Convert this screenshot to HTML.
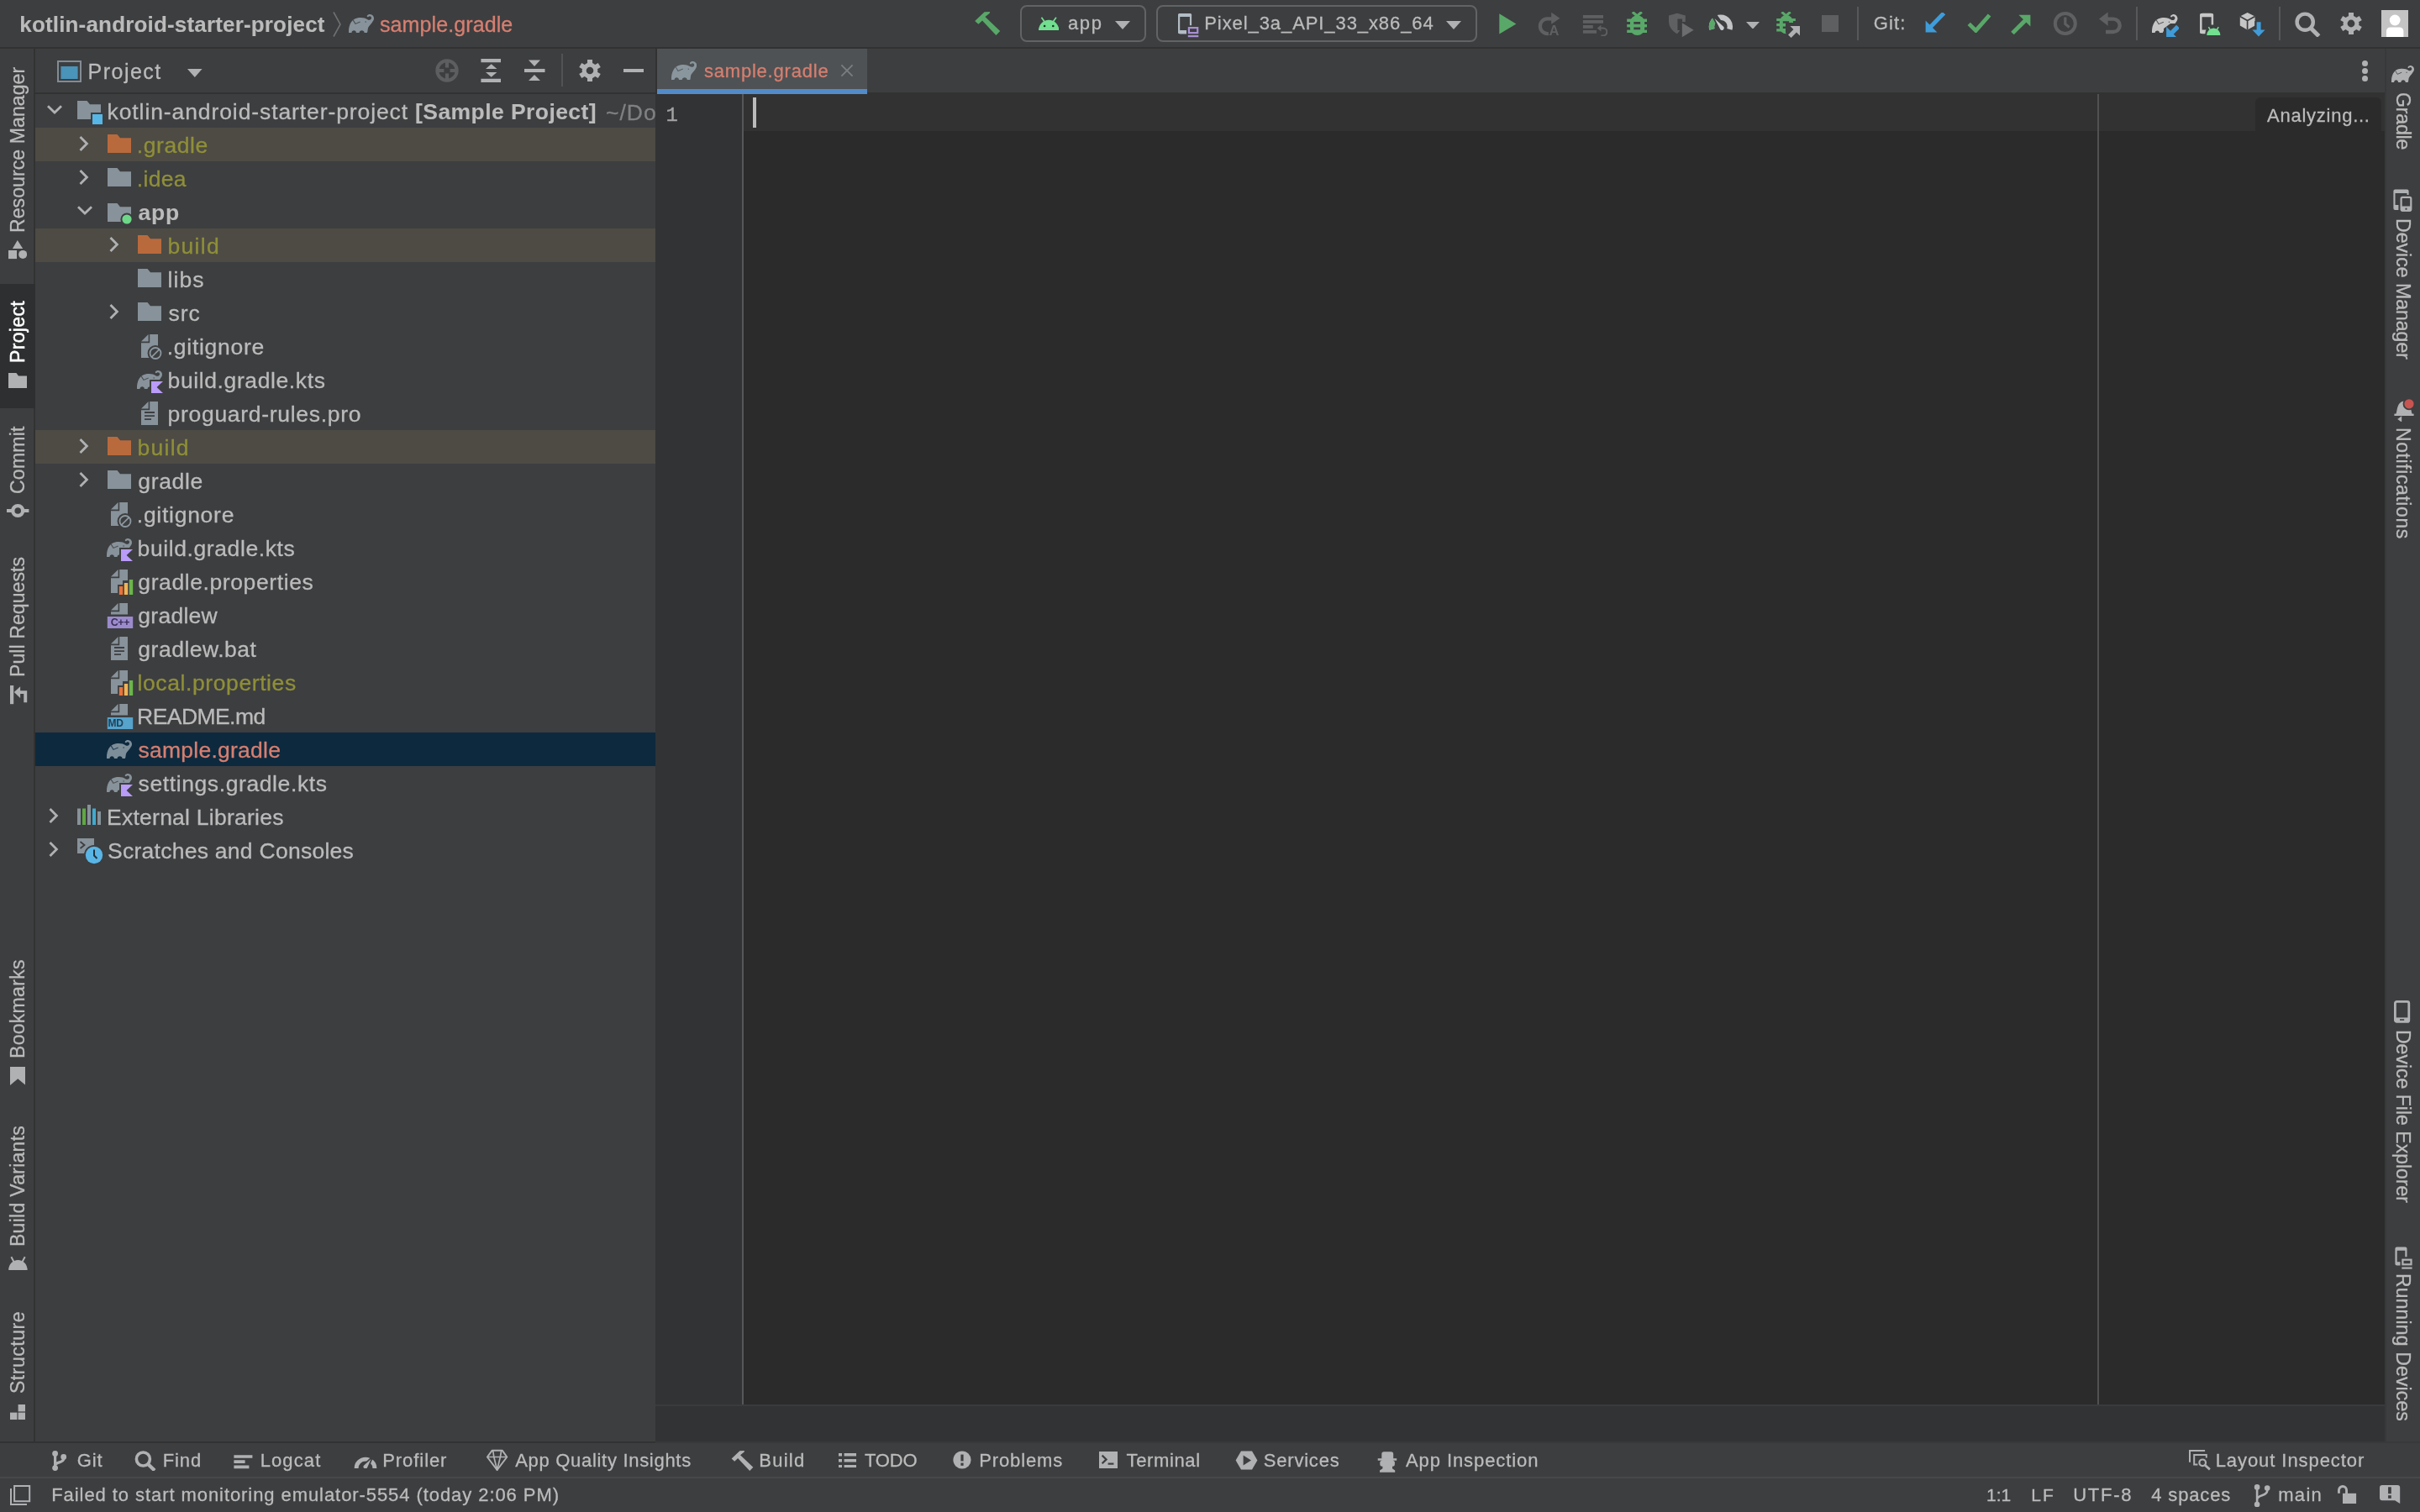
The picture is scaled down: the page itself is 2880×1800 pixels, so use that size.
<!DOCTYPE html>
<html><head><meta charset="utf-8"><title>Android Studio</title>
<style>
html,body{margin:0;padding:0;}
body{width:2880px;height:1800px;overflow:hidden;background:#3d3e40;position:relative;font-family:"Liberation Sans",sans-serif;}
div,span,svg{position:absolute;display:block;}
span{white-space:pre;-webkit-text-stroke:0.3px;}
#root{left:0;top:0;width:2880px;height:1800px;will-change:transform;}
</style></head><body><div id="root">
<div style="left:0px;top:56px;width:2880px;height:2px;background:#323232;"></div>
<div style="left:0px;top:58px;width:40px;height:1658px;background:#3d3e40;"></div>
<div style="left:40px;top:58px;width:2px;height:1658px;background:#323232;"></div>
<div style="left:42px;top:110px;width:738px;height:2px;background:#323232;"></div>
<div style="left:780px;top:58px;width:2px;height:54px;background:#323232;"></div>
<div style="left:782px;top:110px;width:2056px;height:2px;background:#323232;"></div>
<div style="left:782px;top:58px;width:250px;height:54px;background:#4e5254;"></div>
<div style="left:782px;top:106px;width:250px;height:6px;background:#528bc8;"></div>
<div style="left:780px;top:112px;width:104px;height:1560px;background:#313335;"></div>
<div style="left:885px;top:112px;width:1953px;height:1560px;background:#2b2b2b;"></div>
<div style="left:883px;top:112px;width:2px;height:1560px;background:#555759;"></div>
<div style="left:885px;top:112px;width:1953px;height:44px;background:#323232;"></div>
<div style="left:2496px;top:112px;width:2px;height:1560px;background:#515151;"></div>
<div style="left:780px;top:1672px;width:2058px;height:44px;background:#313335;"></div>
<div style="left:780px;top:1672px;width:2058px;height:2px;background:#393b3d;"></div>
<div style="left:2838px;top:58px;width:2px;height:1658px;background:#37393b;"></div>
<div style="left:2840px;top:58px;width:40px;height:1658px;background:#3d3e40;"></div>
<div style="left:0px;top:1716px;width:2880px;height:2px;background:#323232;"></div>
<div style="left:780px;top:1716px;width:2100px;height:2px;background:#37393b;"></div>
<div style="left:0px;top:1758px;width:2880px;height:2px;background:#474849;"></div>
<div style="left:2684px;top:116px;width:150px;height:40px;background:#2b2b2b;border-radius:6px 6px 0 0;"></div>
<span style="line-height:29px;height:29px;font-size:22px;color:#bbbbbb;letter-spacing:0.750px;left:2698.00px;top:123.48px;">Analyzing...</span>
<div style="left:896px;top:116px;width:4px;height:36px;background:#bbbbbb;"></div>
<span style="left:792.5px;top:122px;line-height:32px;font-size:24px;color:#a4a3a3;font-family:'Liberation Mono',monospace;">1</span>
<div style="left:2810.5px;top:71.5px;width:7px;height:7px;background:#afb1b3;border-radius:50%;"></div>
<div style="left:2810.5px;top:80.5px;width:7px;height:7px;background:#afb1b3;border-radius:50%;"></div>
<div style="left:2810.5px;top:89.5px;width:7px;height:7px;background:#afb1b3;border-radius:50%;"></div>
<svg style="left:56px;top:124px;" width="18" height="14" viewBox="0 0 18 14"><path d="M1,2.2 L9,10 L17,2.2" fill="none" stroke="#afb1b3" stroke-width="2.8"/></svg>
<svg style="left:92px;top:120px;" width="28" height="22" viewBox="0 0 28 22"><path d="M0,0 L11.5,0 L15,4.2 L28,4.2 L28,22 L0,22 Z" fill="#9aa7b0" fill-opacity="0.8"/></svg>
<div style="left:108px;top:134px;width:14px;height:14px;background:#3d3e40;"></div>
<div style="left:110px;top:136px;width:12px;height:12px;background:#56b6e6;"></div>
<span style="line-height:35px;height:35px;font-size:26.5px;color:#bbbbbb;letter-spacing:0.903px;left:127.55px;top:116.12px;">kotlin-android-starter-project</span>
<span style="line-height:35px;height:35px;font-size:26.5px;color:#bbbbbb;letter-spacing:0.427px;font-weight:bold;-webkit-text-stroke:0.1px;left:494.10px;top:116.12px;">[Sample Project]</span>
<div style="left:721px;top:112px;width:59px;height:40px;overflow:hidden;"><span style="left:0;top:3.62px;line-height:36px;font-size:26.5px;color:#7f8183;letter-spacing:1px;">~/Documents</span></div>
<div style="left:42px;top:152px;width:738px;height:40px;background:#4d4b44;"></div>
<svg style="left:94.4px;top:162.2px;" width="12" height="18" viewBox="0 0 12 18"><path d="M1.5,1 L9.4,9 L1.5,17" fill="none" stroke="#afb1b3" stroke-width="2.8"/></svg>
<svg style="left:128px;top:160px;" width="28" height="22" viewBox="0 0 28 22"><path d="M0,0 L11.5,0 L15,4.2 L28,4.2 L28,22 L0,22 Z" fill="#b96a3c" fill-opacity="1"/></svg>
<span style="line-height:35px;height:35px;font-size:26.5px;color:#8f8f38;letter-spacing:0.575px;left:162.80px;top:156.12px;">.gradle</span>
<svg style="left:94.4px;top:202.2px;" width="12" height="18" viewBox="0 0 12 18"><path d="M1.5,1 L9.4,9 L1.5,17" fill="none" stroke="#afb1b3" stroke-width="2.8"/></svg>
<svg style="left:128px;top:200px;" width="28" height="22" viewBox="0 0 28 22"><path d="M0,0 L11.5,0 L15,4.2 L28,4.2 L28,22 L0,22 Z" fill="#9aa7b0" fill-opacity="0.8"/></svg>
<span style="line-height:35px;height:35px;font-size:26.5px;color:#8f8f38;letter-spacing:0.325px;left:162.80px;top:196.12px;">.idea</span>
<svg style="left:92px;top:244px;" width="18" height="14" viewBox="0 0 18 14"><path d="M1,2.2 L9,10 L17,2.2" fill="none" stroke="#afb1b3" stroke-width="2.8"/></svg>
<svg style="left:128px;top:242px;" width="28" height="22" viewBox="0 0 28 22"><path d="M0,0 L11.5,0 L15,4.2 L28,4.2 L28,22 L0,22 Z" fill="#9aa7b0" fill-opacity="0.8"/></svg>
<svg style="left:142px;top:252px;" width="18" height="18" viewBox="0 0 18 18"><circle cx="9" cy="9" r="7.6" fill="#3d3e40"/><circle cx="9" cy="9" r="5.6" fill="#6cd888"/></svg>
<span style="line-height:35px;height:35px;font-size:26.5px;color:#bbbbbb;letter-spacing:0.750px;font-weight:bold;-webkit-text-stroke:0.1px;left:164.55px;top:236.12px;">app</span>
<div style="left:42px;top:272px;width:738px;height:40px;background:#4d4b44;"></div>
<svg style="left:130.4px;top:282.2px;" width="12" height="18" viewBox="0 0 12 18"><path d="M1.5,1 L9.4,9 L1.5,17" fill="none" stroke="#afb1b3" stroke-width="2.8"/></svg>
<svg style="left:164px;top:280px;" width="28" height="22" viewBox="0 0 28 22"><path d="M0,0 L11.5,0 L15,4.2 L28,4.2 L28,22 L0,22 Z" fill="#b96a3c" fill-opacity="1"/></svg>
<span style="line-height:35px;height:35px;font-size:26.5px;color:#8f8f38;letter-spacing:1.275px;left:199.55px;top:276.12px;">build</span>
<svg style="left:164px;top:320px;" width="28" height="22" viewBox="0 0 28 22"><path d="M0,0 L11.5,0 L15,4.2 L28,4.2 L28,22 L0,22 Z" fill="#9aa7b0" fill-opacity="0.8"/></svg>
<span style="line-height:35px;height:35px;font-size:26.5px;color:#bbbbbb;letter-spacing:1.033px;left:199.55px;top:316.12px;">libs</span>
<svg style="left:130.4px;top:362.2px;" width="12" height="18" viewBox="0 0 12 18"><path d="M1.5,1 L9.4,9 L1.5,17" fill="none" stroke="#afb1b3" stroke-width="2.8"/></svg>
<svg style="left:164px;top:360px;" width="28" height="22" viewBox="0 0 28 22"><path d="M0,0 L11.5,0 L15,4.2 L28,4.2 L28,22 L0,22 Z" fill="#9aa7b0" fill-opacity="0.8"/></svg>
<span style="line-height:35px;height:35px;font-size:26.5px;color:#bbbbbb;letter-spacing:0.975px;left:200.55px;top:356.12px;">src</span>
<svg style="left:162px;top:398px;" width="36" height="32" viewBox="-6 0 36 32"><path d="M0,8.6 L8.6,0 L8.6,8.6 Z" fill="#9aa7b0" fill-opacity=".8"/><path d="M10.2,0 L20,0 L20,28 L0,28 L0,10.2 L10.2,10.2 Z" fill="#9aa7b0" fill-opacity=".8"/><circle cx="17" cy="22.5" r="9.4" fill="#3d3e40"/><circle cx="17" cy="22.5" r="6.5" fill="none" stroke="#9aa7b0" stroke-opacity=".85" stroke-width="1.8"/><path d="M12.6,26.9 L21.4,18.1" stroke="#9aa7b0" stroke-opacity=".85" stroke-width="1.8"/></svg>
<span style="line-height:35px;height:35px;font-size:26.5px;color:#bbbbbb;letter-spacing:0.706px;left:198.80px;top:396.12px;">.gitignore</span>
<svg style="left:163px;top:441px;" width="30" height="22" viewBox="0 0 30 22"><path d="M0,22 C-0.3,14.5 2.2,7.6 7.7,5.2 C11.2,3.7 16,3.7 19,4.6 C20.6,5.1 21.8,5.9 22.8,6.5 C23.4,6.9 25,7 26,6.3 C27.2,5.5 27.3,3.8 26.4,2.8 C25.6,1.9 24,2 23.4,3 C23,3.6 21.9,3.4 21.7,2.6 C21.6,1.6 22.6,0.5 24.3,0.1 C26.4,-0.3 28.6,0.8 29.5,2.8 C30.5,5 29.8,7 28.6,8.6 C27.6,10.6 25.6,12.6 24,14.6 C23,15.9 22.8,17.4 22.6,18.8 C22.5,20 22.2,22 21.8,22 L18.6,22 C18.6,18.2 12.6,18.2 12.6,22 L8.9,22 C8.9,18.2 3.5,18.2 3.5,22 Z" fill="#9aa7b0" fill-opacity="0.8"/><path d="M5.2,6.9 L7.9,11.4 L13.6,9" fill="none" stroke="#3d3e40" stroke-width="1.1" stroke-opacity=".8"/><circle cx="20.1" cy="9.1" r="0.75" fill="#3d3e40" fill-opacity=".8"/></svg>
<svg style="left:178px;top:452px;" width="16" height="18" viewBox="0 0 16 18"><path d="M0,0 H16 V18 H0Z" fill="#3d3e40"/><path d="M2,2 H16 L8.6,9 L16,16 H2 Z" fill="#b99bf8"/></svg>
<span style="line-height:35px;height:35px;font-size:26.5px;color:#bbbbbb;letter-spacing:0.607px;left:199.55px;top:436.12px;">build.gradle.kts</span>
<svg style="left:162px;top:478px;" width="36" height="32" viewBox="-6 0 36 32"><path d="M0,8.6 L8.6,0 L8.6,8.6 Z" fill="#9aa7b0" fill-opacity=".8"/><path d="M10.2,0 L20,0 L20,28 L0,28 L0,10.2 L10.2,10.2 Z" fill="#9aa7b0" fill-opacity=".8"/><path d="M4,13 H16 M4,17.2 H16 M4,21.2 H12" stroke="#3d3e40" stroke-width="1.8"/></svg>
<span style="line-height:35px;height:35px;font-size:26.5px;color:#bbbbbb;letter-spacing:0.703px;left:199.55px;top:476.12px;">proguard-rules.pro</span>
<div style="left:42px;top:512px;width:738px;height:40px;background:#4d4b44;"></div>
<svg style="left:94.4px;top:522.2px;" width="12" height="18" viewBox="0 0 12 18"><path d="M1.5,1 L9.4,9 L1.5,17" fill="none" stroke="#afb1b3" stroke-width="2.8"/></svg>
<svg style="left:128px;top:520px;" width="28" height="22" viewBox="0 0 28 22"><path d="M0,0 L11.5,0 L15,4.2 L28,4.2 L28,22 L0,22 Z" fill="#b96a3c" fill-opacity="1"/></svg>
<span style="line-height:35px;height:35px;font-size:26.5px;color:#8f8f38;letter-spacing:1.250px;left:163.55px;top:516.12px;">build</span>
<svg style="left:94.4px;top:562.2px;" width="12" height="18" viewBox="0 0 12 18"><path d="M1.5,1 L9.4,9 L1.5,17" fill="none" stroke="#afb1b3" stroke-width="2.8"/></svg>
<svg style="left:128px;top:560px;" width="28" height="22" viewBox="0 0 28 22"><path d="M0,0 L11.5,0 L15,4.2 L28,4.2 L28,22 L0,22 Z" fill="#9aa7b0" fill-opacity="0.8"/></svg>
<span style="line-height:35px;height:35px;font-size:26.5px;color:#bbbbbb;letter-spacing:0.640px;left:164.30px;top:556.12px;">gradle</span>
<svg style="left:126px;top:598px;" width="36" height="32" viewBox="-6 0 36 32"><path d="M0,8.6 L8.6,0 L8.6,8.6 Z" fill="#9aa7b0" fill-opacity=".8"/><path d="M10.2,0 L20,0 L20,28 L0,28 L0,10.2 L10.2,10.2 Z" fill="#9aa7b0" fill-opacity=".8"/><circle cx="17" cy="22.5" r="9.4" fill="#3d3e40"/><circle cx="17" cy="22.5" r="6.5" fill="none" stroke="#9aa7b0" stroke-opacity=".85" stroke-width="1.8"/><path d="M12.6,26.9 L21.4,18.1" stroke="#9aa7b0" stroke-opacity=".85" stroke-width="1.8"/></svg>
<span style="line-height:35px;height:35px;font-size:26.5px;color:#bbbbbb;letter-spacing:0.728px;left:162.80px;top:596.12px;">.gitignore</span>
<svg style="left:127px;top:641px;" width="30" height="22" viewBox="0 0 30 22"><path d="M0,22 C-0.3,14.5 2.2,7.6 7.7,5.2 C11.2,3.7 16,3.7 19,4.6 C20.6,5.1 21.8,5.9 22.8,6.5 C23.4,6.9 25,7 26,6.3 C27.2,5.5 27.3,3.8 26.4,2.8 C25.6,1.9 24,2 23.4,3 C23,3.6 21.9,3.4 21.7,2.6 C21.6,1.6 22.6,0.5 24.3,0.1 C26.4,-0.3 28.6,0.8 29.5,2.8 C30.5,5 29.8,7 28.6,8.6 C27.6,10.6 25.6,12.6 24,14.6 C23,15.9 22.8,17.4 22.6,18.8 C22.5,20 22.2,22 21.8,22 L18.6,22 C18.6,18.2 12.6,18.2 12.6,22 L8.9,22 C8.9,18.2 3.5,18.2 3.5,22 Z" fill="#9aa7b0" fill-opacity="0.8"/><path d="M5.2,6.9 L7.9,11.4 L13.6,9" fill="none" stroke="#3d3e40" stroke-width="1.1" stroke-opacity=".8"/><circle cx="20.1" cy="9.1" r="0.75" fill="#3d3e40" fill-opacity=".8"/></svg>
<svg style="left:142px;top:652px;" width="16" height="18" viewBox="0 0 16 18"><path d="M0,0 H16 V18 H0Z" fill="#3d3e40"/><path d="M2,2 H16 L8.6,9 L16,16 H2 Z" fill="#b99bf8"/></svg>
<span style="line-height:35px;height:35px;font-size:26.5px;color:#bbbbbb;letter-spacing:0.600px;left:163.55px;top:636.12px;">build.gradle.kts</span>
<svg style="left:126px;top:678px;" width="36" height="32" viewBox="-6 0 36 32"><path d="M0,8.6 L8.6,0 L8.6,8.6 Z" fill="#9aa7b0" fill-opacity=".8"/><path d="M10.2,0 L20,0 L20,28 L0,28 L0,10.2 L10.2,10.2 Z" fill="#9aa7b0" fill-opacity=".8"/><path d="M8,18 H20 V28 H8 Z" fill="#3d3e40"/><path d="M14,13 H20 V20 H14Z" fill="#3d3e40"/><rect x="9.8" y="20" width="4.4" height="10" fill="#e8743b"/><rect x="15.8" y="16" width="4.4" height="14" fill="#f0b455"/><rect x="21.8" y="12" width="4.4" height="18" fill="#6bb54b"/></svg>
<span style="line-height:35px;height:35px;font-size:26.5px;color:#bbbbbb;letter-spacing:0.597px;left:164.30px;top:676.12px;">gradle.properties</span>
<svg style="left:126px;top:718px;" width="36" height="32" viewBox="-6 0 36 32"><path d="M0,8.6 L8.6,0 L8.6,8.6 Z" fill="#9aa7b0" fill-opacity=".8"/><path d="M10.2,0 L20,0 L20,13.6 L0,13.6 L0,10.2 L10.2,10.2 Z" fill="#9aa7b0" fill-opacity=".8"/><rect x="-4.2" y="16" width="30.4" height="14" fill="#9c8bcc"/><text x="11" y="27.4" font-family="Liberation Sans" font-weight="bold" font-size="12.5" fill="#3b2e5a" text-anchor="middle" letter-spacing="-.3">C++</text></svg>
<span style="line-height:35px;height:35px;font-size:26.5px;color:#bbbbbb;letter-spacing:0.267px;left:164.30px;top:716.12px;">gradlew</span>
<svg style="left:126px;top:758px;" width="36" height="32" viewBox="-6 0 36 32"><path d="M0,8.6 L8.6,0 L8.6,8.6 Z" fill="#9aa7b0" fill-opacity=".8"/><path d="M10.2,0 L20,0 L20,28 L0,28 L0,10.2 L10.2,10.2 Z" fill="#9aa7b0" fill-opacity=".8"/><path d="M4,13 H16 M4,17.2 H16 M4,21.2 H12" stroke="#3d3e40" stroke-width="1.8"/></svg>
<span style="line-height:35px;height:35px;font-size:26.5px;color:#bbbbbb;letter-spacing:0.510px;left:164.30px;top:756.12px;">gradlew.bat</span>
<svg style="left:126px;top:798px;" width="36" height="32" viewBox="-6 0 36 32"><path d="M0,8.6 L8.6,0 L8.6,8.6 Z" fill="#9aa7b0" fill-opacity=".8"/><path d="M10.2,0 L20,0 L20,28 L0,28 L0,10.2 L10.2,10.2 Z" fill="#9aa7b0" fill-opacity=".8"/><path d="M8,18 H20 V28 H8 Z" fill="#3d3e40"/><path d="M14,13 H20 V20 H14Z" fill="#3d3e40"/><rect x="9.8" y="20" width="4.4" height="10" fill="#e8743b"/><rect x="15.8" y="16" width="4.4" height="14" fill="#f0b455"/><rect x="21.8" y="12" width="4.4" height="18" fill="#6bb54b"/></svg>
<span style="line-height:35px;height:35px;font-size:26.5px;color:#8f8f38;letter-spacing:0.593px;left:163.55px;top:796.12px;">local.properties</span>
<svg style="left:126px;top:838px;" width="36" height="32" viewBox="-6 0 36 32"><path d="M0,8.6 L8.6,0 L8.6,8.6 Z" fill="#9aa7b0" fill-opacity=".8"/><path d="M10.2,0 L20,0 L20,13.6 L0,13.6 L0,10.2 L10.2,10.2 Z" fill="#9aa7b0" fill-opacity=".8"/><rect x="-4.2" y="16" width="30.4" height="14" fill="#56a3cc"/><text x="5.5" y="27.2" font-family="Liberation Sans" font-weight="bold" font-size="12" fill="#1f4257" text-anchor="middle" letter-spacing="-.2">MD</text></svg>
<span style="line-height:35px;height:35px;font-size:26.5px;color:#bbbbbb;letter-spacing:-0.550px;left:163.05px;top:836.12px;">README.md</span>
<div style="left:42px;top:872px;width:738px;height:40px;background:#0d293e;"></div>
<svg style="left:127px;top:881px;" width="30" height="22" viewBox="0 0 30 22"><path d="M0,22 C-0.3,14.5 2.2,7.6 7.7,5.2 C11.2,3.7 16,3.7 19,4.6 C20.6,5.1 21.8,5.9 22.8,6.5 C23.4,6.9 25,7 26,6.3 C27.2,5.5 27.3,3.8 26.4,2.8 C25.6,1.9 24,2 23.4,3 C23,3.6 21.9,3.4 21.7,2.6 C21.6,1.6 22.6,0.5 24.3,0.1 C26.4,-0.3 28.6,0.8 29.5,2.8 C30.5,5 29.8,7 28.6,8.6 C27.6,10.6 25.6,12.6 24,14.6 C23,15.9 22.8,17.4 22.6,18.8 C22.5,20 22.2,22 21.8,22 L18.6,22 C18.6,18.2 12.6,18.2 12.6,22 L8.9,22 C8.9,18.2 3.5,18.2 3.5,22 Z" fill="#9aa7b0" fill-opacity="0.8"/><path d="M5.2,6.9 L7.9,11.4 L13.6,9" fill="none" stroke="#0d293e" stroke-width="1.1" stroke-opacity=".8"/><circle cx="20.1" cy="9.1" r="0.75" fill="#0d293e" fill-opacity=".8"/></svg>
<span style="line-height:35px;height:35px;font-size:26.5px;color:#d67f70;letter-spacing:0.242px;left:164.55px;top:876.12px;">sample.gradle</span>
<svg style="left:127px;top:921px;" width="30" height="22" viewBox="0 0 30 22"><path d="M0,22 C-0.3,14.5 2.2,7.6 7.7,5.2 C11.2,3.7 16,3.7 19,4.6 C20.6,5.1 21.8,5.9 22.8,6.5 C23.4,6.9 25,7 26,6.3 C27.2,5.5 27.3,3.8 26.4,2.8 C25.6,1.9 24,2 23.4,3 C23,3.6 21.9,3.4 21.7,2.6 C21.6,1.6 22.6,0.5 24.3,0.1 C26.4,-0.3 28.6,0.8 29.5,2.8 C30.5,5 29.8,7 28.6,8.6 C27.6,10.6 25.6,12.6 24,14.6 C23,15.9 22.8,17.4 22.6,18.8 C22.5,20 22.2,22 21.8,22 L18.6,22 C18.6,18.2 12.6,18.2 12.6,22 L8.9,22 C8.9,18.2 3.5,18.2 3.5,22 Z" fill="#9aa7b0" fill-opacity="0.8"/><path d="M5.2,6.9 L7.9,11.4 L13.6,9" fill="none" stroke="#3d3e40" stroke-width="1.1" stroke-opacity=".8"/><circle cx="20.1" cy="9.1" r="0.75" fill="#3d3e40" fill-opacity=".8"/></svg>
<svg style="left:142px;top:932px;" width="16" height="18" viewBox="0 0 16 18"><path d="M0,0 H16 V18 H0Z" fill="#3d3e40"/><path d="M2,2 H16 L8.6,9 L16,16 H2 Z" fill="#b99bf8"/></svg>
<span style="line-height:35px;height:35px;font-size:26.5px;color:#bbbbbb;letter-spacing:0.603px;left:164.55px;top:916.12px;">settings.gradle.kts</span>
<svg style="left:58.4px;top:962.2px;" width="12" height="18" viewBox="0 0 12 18"><path d="M1.5,1 L9.4,9 L1.5,17" fill="none" stroke="#afb1b3" stroke-width="2.8"/></svg>
<svg style="left:92px;top:958px;" width="28" height="24" viewBox="0 0 28 24"><rect x="0" y="4.5" width="4" height="19.5" fill="#9aa7b0" fill-opacity=".8"/><rect x="6" y="4.5" width="4" height="19.5" fill="#62b543" fill-opacity=".9"/><rect x="12" y="0" width="4" height="24" fill="#9aa7b0" fill-opacity=".8"/><rect x="18" y="4.5" width="4" height="19.5" fill="#40b6e0" fill-opacity=".9"/><rect x="24" y="8" width="4" height="16" fill="#9aa7b0" fill-opacity=".8"/></svg>
<span style="line-height:35px;height:35px;font-size:26.5px;color:#bbbbbb;letter-spacing:0.247px;left:127.05px;top:956.12px;">External Libraries</span>
<svg style="left:58.4px;top:1002.2px;" width="12" height="18" viewBox="0 0 12 18"><path d="M1.5,1 L9.4,9 L1.5,17" fill="none" stroke="#afb1b3" stroke-width="2.8"/></svg>
<svg style="left:92px;top:998px;" width="32" height="32" viewBox="0 0 32 32"><rect x="0" y="0" width="20" height="18" fill="#9aa7b0" fill-opacity=".8"/><path d="M3.5,4 L8.5,8 L3.5,12" fill="none" stroke="#3d3e40" stroke-width="1.8"/><circle cx="20" cy="20" r="12" fill="#3d3e40"/><circle cx="20" cy="20" r="10.2" fill="#59b5e6"/><path d="M20,13.5 V20.5 L23.5,24" fill="none" stroke="#23323c" stroke-width="2"/></svg>
<span style="line-height:35px;height:35px;font-size:26.5px;color:#bbbbbb;letter-spacing:0.262px;left:128.05px;top:996.12px;">Scratches and Consoles</span>
<span style="line-height:34px;height:34px;font-size:26px;color:#bbbbbb;letter-spacing:0.172px;font-weight:bold;-webkit-text-stroke:0.1px;left:23.25px;top:11.99px;">kotlin-android-starter-project</span>
<svg style="left:396px;top:14px;" width="10" height="30" viewBox="0 0 10 30"><path d="M1,0.5 L9,15 L1,29.5" fill="none" stroke="#6e7072" stroke-width="1.6"/></svg>
<svg style="left:415px;top:17px;" width="30" height="22" viewBox="0 0 30 22"><path d="M0,22 C-0.3,14.5 2.2,7.6 7.7,5.2 C11.2,3.7 16,3.7 19,4.6 C20.6,5.1 21.8,5.9 22.8,6.5 C23.4,6.9 25,7 26,6.3 C27.2,5.5 27.3,3.8 26.4,2.8 C25.6,1.9 24,2 23.4,3 C23,3.6 21.9,3.4 21.7,2.6 C21.6,1.6 22.6,0.5 24.3,0.1 C26.4,-0.3 28.6,0.8 29.5,2.8 C30.5,5 29.8,7 28.6,8.6 C27.6,10.6 25.6,12.6 24,14.6 C23,15.9 22.8,17.4 22.6,18.8 C22.5,20 22.2,22 21.8,22 L18.6,22 C18.6,18.2 12.6,18.2 12.6,22 L8.9,22 C8.9,18.2 3.5,18.2 3.5,22 Z" fill="#9aa7b0" fill-opacity="0.8"/><path d="M5.2,6.9 L7.9,11.4 L13.6,9" fill="none" stroke="#3d3e40" stroke-width="1.1" stroke-opacity=".8"/><circle cx="20.1" cy="9.1" r="0.75" fill="#3d3e40" fill-opacity=".8"/></svg>
<span style="line-height:33px;height:33px;font-size:25px;color:#d67f70;letter-spacing:0.108px;left:451.95px;top:12.84px;">sample.gradle</span>
<svg style="left:1160px;top:14px;" width="30.5" height="28" viewBox="0 0 30.5 28"><path d="M0.2,11.1 L11.6,0.2 L18,0 L17.8,1.7 L12.4,6.1 L30.2,23 L25.4,28 L9,10.6 L4.4,14.8 Z" fill="#59a869"/></svg>
<div style="left:1214px;top:6px;width:150px;height:44px;background:transparent;border:2px solid #616365;border-radius:8px;box-sizing:border-box;"></div>
<svg style="left:1236px;top:20px;" width="24.4" height="16.3" viewBox="0 0 24 16"><path d="M0,16 A12,12.3 0 0 1 24,16 Z" fill="#72de90"/><path d="M6.9,5.6 L3.4,0.7 M17.1,5.6 L20.6,0.7" stroke="#72de90" stroke-width="1.7"/><circle cx="7" cy="10.9" r="1.25" fill="#0c3a1c"/><circle cx="17" cy="10.9" r="1.25" fill="#0c3a1c"/></svg>
<span style="line-height:29px;height:29px;font-size:22px;color:#bbbbbb;letter-spacing:1.625px;left:1271.00px;top:13.48px;">app</span>
<svg style="left:1327px;top:24.5px;" width="18" height="10" viewBox="0 0 18 10"><path d="M0,0 H18 L9.0,10Z" fill="#afb1b3"/></svg>
<div style="left:1376px;top:6px;width:382px;height:44px;background:transparent;border:2px solid #616365;border-radius:8px;box-sizing:border-box;"></div>
<svg style="left:1402px;top:15px;" width="26" height="30" viewBox="0 0 26 30"><rect x="1.1" y="2" width="13.9" height="22.1" rx="1.6" fill="none" stroke="#b2bcc4" stroke-width="2.2"/><rect x="0" y="0.9" width="16.1" height="4.2" rx="1.6" fill="#b2bcc4"/><rect x="0" y="21" width="16.1" height="4.2" rx="1.6" fill="#b2bcc4"/><rect x="10" y="15.2" width="16" height="14.8" fill="#3d3e40"/><rect x="12.9" y="18.1" width="10.3" height="6" fill="none" stroke="#a78fd2" stroke-width="2.2"/><rect x="11.8" y="26.9" width="12.5" height="2.3" fill="#a78fd2"/></svg>
<span style="line-height:29px;height:29px;font-size:22px;color:#bbbbbb;letter-spacing:0.917px;left:1433.25px;top:13.48px;">Pixel_3a_API_33_x86_64</span>
<svg style="left:1721px;top:24.5px;" width="18" height="10" viewBox="0 0 18 10"><path d="M0,0 H18 L9.0,10Z" fill="#afb1b3"/></svg>
<svg style="left:1783.5px;top:15.5px;" width="21" height="25" viewBox="0 0 21 25"><path d="M0.3,0.3 L20.4,12.4 L0.3,24.6 Z" fill="#59a869"/></svg>
<svg style="left:1829px;top:13px;" width="29" height="30" viewBox="0 0 29 30"><path d="M14,27 A8.8,8.8 0 1 1 11.6,9.3 H18" fill="none" stroke="#5e6062" stroke-width="4.2"/><path d="M17.2,1.7 L27.4,8.8 L17.2,15.8 Z" fill="#5e6062"/><text x="14.6" y="29.2" font-family="Liberation Sans" font-weight="bold" font-size="16.5" fill="#5e6062">A</text></svg>
<svg style="left:1883px;top:17px;" width="30" height="26" viewBox="0 0 30 26"><path d="M0.9,2.9 H25 M0.9,8.9 H25 M0.9,14.9 H12.8 M0.9,20.9 H17" stroke="#5e6062" stroke-width="3.8"/><path d="M22.4,25.4 H25 A4,4 0 0 0 25,16.6 H21" fill="none" stroke="#5e6062" stroke-width="2"/><path d="M22.4,12.8 L17.8,16.6 L22.4,20.4 Z" fill="#5e6062"/></svg>
<svg style="left:1935.7px;top:14px;" width="24.5" height="29" viewBox="0 0 24.5 29"><path d="M6.8,0.3 L12.3,4.9 L17.8,0.3" fill="none" stroke="#59a869" stroke-width="3.2"/><path d="M3.9,13 A8.7,8.7 0 0 1 21.3,13 V19.4 A8.7,8.7 0 0 1 3.9,19.4 Z" fill="#59a869"/><path d="M0.2,10.35 H24.4 M0.2,16.75 H24.4 M0.2,23.35 H24.4" stroke="#59a869" stroke-width="3.5"/><path d="M0,13.4 H3.7 M21.5,13.4 H24.5 M0,20 H3.7 M21.5,20 H24.5" stroke="#3d3e40" stroke-width="2.7"/><path d="M8.3,13.4 H16.1 M8.3,19.9 H16.1" stroke="#3d3e40" stroke-width="2.6"/></svg>
<svg style="left:1985px;top:15px;" width="32" height="30" viewBox="0 0 32 30"><path d="M1,3.4 L11,0.8 L20.8,3.4 V11 L17,11 V7.6 H11.4 V21 L14.4,21 L11,25.2 C5,22 1,17 1,10 Z" fill="#5e6062"/><path d="M16.8,12.3 L30.7,20.8 L16.8,29.2 Z" fill="#6b6d6f"/></svg>
<svg style="left:2033px;top:17px;" width="30" height="22" viewBox="0 0 30 22"><path d="M4.48,17.89 A10.9,10.9 0 1 1 25.32,17.89" fill="none" stroke="#c2c4c6" stroke-width="6.4"/><path d="M4.48,17.89 A10.9,10.9 0 0 1 8.65,5.77" fill="none" stroke="#59a869" stroke-width="6.4"/><path d="M4.6,3.4 L10.4,0.4 L20.6,15 A4.2,4.2 0 0 1 13.4,19.4 Z" fill="#3d3e40"/><path d="M7.5,4.9 L18.4,15 A2.55,2.55 0 0 1 14.3,18 Z" fill="#c8cacc"/></svg>
<svg style="left:2078px;top:25.8px;" width="16" height="8.6" viewBox="0 0 16 8.6"><path d="M0,0 H16 L8.0,8.6Z" fill="#afb1b3"/></svg>
<svg style="left:2113.7px;top:14px;" width="23" height="27.2" viewBox="0 0 24.5 29"><path d="M6.8,0.3 L12.3,4.9 L17.8,0.3" fill="none" stroke="#59a869" stroke-width="3.2"/><path d="M3.9,13 A8.7,8.7 0 0 1 21.3,13 V19.4 A8.7,8.7 0 0 1 3.9,19.4 Z" fill="#59a869"/><path d="M0.2,10.35 H24.4 M0.2,16.75 H24.4 M0.2,23.35 H24.4" stroke="#59a869" stroke-width="3.5"/><path d="M0,13.4 H3.7 M21.5,13.4 H24.5 M0,20 H3.7 M21.5,20 H24.5" stroke="#3d3e40" stroke-width="2.7"/><path d="M8.3,13.4 H16.1 M8.3,19.9 H16.1" stroke="#3d3e40" stroke-width="2.6"/></svg>
<svg style="left:2125px;top:27px;" width="19" height="18" viewBox="0 0 19 18"><path d="M0,0 H19 V18 H4 L0,12Z" fill="#3d3e40"/><path d="M5.4,4 H17 V15.6 L13,11.6 L6.6,18 L3,14.4 L9.4,8 Z" fill="#afb1b3"/></svg>
<div style="left:2168px;top:18px;width:20.3px;height:20px;background:#5e5f61;"></div>
<div style="left:2210px;top:8px;width:2px;height:40px;background:#56585a;"></div>
<span style="line-height:29px;height:29px;font-size:22px;color:#bbbbbb;letter-spacing:1.183px;left:2229.70px;top:13.48px;">Git:</span>
<svg style="left:2291px;top:15px;" width="24" height="24" viewBox="0 0 24 24"><path d="M22.4,0.6 L6.5,17" stroke="#3f9cd8" stroke-width="5" fill="none"/><path d="M0.6,9.6 V23.4 H14.4 Z" fill="#3f9cd8"/></svg>
<svg style="left:2341px;top:15px;" width="29" height="24" viewBox="0 0 29 24"><path d="M2.2,13.4 L10.4,21.4 L26.6,3" fill="none" stroke="#59a869" stroke-width="4.8"/></svg>
<svg style="left:2393px;top:17px;" width="24" height="24" viewBox="0 0 24 24"><path d="M2,22.4 L18,6.5" stroke="#59a869" stroke-width="5" fill="none"/><path d="M9.4,0.8 H23.4 V14.6 Z" fill="#59a869"/></svg>
<svg style="left:2443px;top:13px;" width="30" height="30" viewBox="0 0 30 30"><circle cx="14.8" cy="15" r="12" fill="none" stroke="#5e6062" stroke-width="4"/><path d="M14.8,7.6 V15.6 L19.6,19.4" fill="none" stroke="#5e6062" stroke-width="3.2"/></svg>
<svg style="left:2497px;top:13px;" width="28" height="28" viewBox="0 0 28 28"><path d="M10,9.6 H18 A7.6,7.6 0 0 1 18,25 H9" fill="none" stroke="#5e6062" stroke-width="4.4"/><path d="M11.6,1.4 L1,9.6 L11.6,17.8 Z" fill="#5e6062"/></svg>
<div style="left:2542px;top:8px;width:2px;height:40px;background:#56585a;"></div>
<svg style="left:2561px;top:16.5px;" width="30.5" height="22.5" viewBox="0 0 30 22"><path d="M0,22 C-0.3,14.5 2.2,7.6 7.7,5.2 C11.2,3.7 16,3.7 19,4.6 C20.6,5.1 21.8,5.9 22.8,6.5 C23.4,6.9 25,7 26,6.3 C27.2,5.5 27.3,3.8 26.4,2.8 C25.6,1.9 24,2 23.4,3 C23,3.6 21.9,3.4 21.7,2.6 C21.6,1.6 22.6,0.5 24.3,0.1 C26.4,-0.3 28.6,0.8 29.5,2.8 C30.5,5 29.8,7 28.6,8.6 C27.6,10.6 25.6,12.6 24,14.6 C23,15.9 22.8,17.4 22.6,18.8 C22.5,20 22.2,22 21.8,22 L18.6,22 C18.6,18.2 12.6,18.2 12.6,22 L8.9,22 C8.9,18.2 3.5,18.2 3.5,22 Z" fill="#c6c6c6" fill-opacity="1"/><path d="M5.2,6.9 L7.9,11.4 L13.6,9" fill="none" stroke="#3d3e40" stroke-width="1.1" stroke-opacity=".8"/><circle cx="20.1" cy="9.1" r="0.75" fill="#3d3e40" fill-opacity=".8"/></svg>
<svg style="left:2575px;top:27px;" width="18" height="18" viewBox="0 0 18 18"><path d="M0,7 L8,1 L18,1 V18 H0Z" fill="#3d3e40"/><path d="M17,4.6 L9,12.6" stroke="#3f9cd8" stroke-width="5.4"/><path d="M3.1,4.8 V17 H15 Z" fill="#3f9cd8"/></svg>
<svg style="left:2617px;top:15px;" width="27" height="29" viewBox="0 0 27 29"><rect x="2.3" y="2.1" width="13.6" height="21.8" rx="2" fill="none" stroke="#c6c6c6" stroke-width="2.5"/><rect x="1.1" y="1" width="16" height="4.2" rx="1.6" fill="#c6c6c6"/><rect x="1.1" y="20.4" width="16" height="4.7" rx="1.6" fill="#c6c6c6"/><path d="M7.6,26.6 A10,10 0 0 1 11.4,17 L10,14.6 H25 L23.6,17 A10,10 0 0 1 27,26.6 V29 H7.6Z" fill="#3d3e40"/><path d="M9.2,27 A8.1,8.6 0 0 1 25.4,27 Z" fill="#72de90"/><path d="M13.2,20.4 L11.4,17.2 M21.4,20.4 L23.2,17.2" stroke="#72de90" stroke-width="1.5"/></svg>
<svg style="left:2665px;top:14px;" width="32" height="30" viewBox="0 0 32 30"><path d="M9.6,1 L18.6,5.6 V16.4 L9.6,21.6 L0.8,16.4 V5.6 Z" fill="#c6c6c6"/><path d="M0.8,5.6 L9.6,10.6 L18.6,5.6 M9.6,10.6 V21.6" fill="none" stroke="#3d3e40" stroke-width="1.7"/><path d="M13,10 H32 V30 H13Z" fill="#3d3e40" fill-opacity="0"/><path d="M18.2,11 H27.6 V19.4 H32 L23,30 L13.6,19.4 H18.2Z" fill="#3d3e40"/><path d="M20.6,12.2 H25.6 V21.4 H30.6 L23,29.4 L15.4,21.4 H20.6 Z" fill="#3f9cd8"/></svg>
<div style="left:2712px;top:8px;width:2px;height:40px;background:#56585a;"></div>
<svg style="left:2731.4px;top:13.5px;" width="31" height="30" viewBox="0 0 31 30"><circle cx="12.2" cy="12.2" r="9.6" fill="none" stroke="#afb1b3" stroke-width="4.4"/><path d="M18.6,19 L28.6,29" stroke="#afb1b3" stroke-width="5"/></svg>
<svg style="left:2784px;top:14px;" width="28" height="28" viewBox="0 0 28 28"><g transform="translate(14,14)" fill="#afb1b3"><circle r="9.5"/><rect x="-3" y="-13" width="6" height="26" transform="rotate(0)"/><rect x="-3" y="-13" width="6" height="26" transform="rotate(60)"/><rect x="-3" y="-13" width="6" height="26" transform="rotate(120)"/><circle r="4.4" fill="#3d3e40"/></g></svg>
<svg style="left:2834px;top:12px;" width="32.4" height="32" viewBox="0 0 32.4 32"><rect width="32.4" height="32" fill="#c4c4c4"/><circle cx="16.2" cy="12" r="6.4" fill="#fff"/><path d="M6,32 V25 A4.6,4.6 0 0 1 10.6,20.4 H21.8 A4.6,4.6 0 0 1 26.4,25 V32 Z" fill="#fff"/></svg>
<svg style="left:67.5px;top:72px;" width="29" height="26" viewBox="0 0 29 26"><rect x="1" y="1" width="27" height="24" fill="none" stroke="#9aa7b0" stroke-opacity=".75" stroke-width="2"/><rect x="4.4" y="7" width="20.2" height="15" fill="#4a93b9"/></svg>
<span style="line-height:33px;height:33px;font-size:25px;color:#bbbbbb;letter-spacing:1.483px;left:104.60px;top:68.84px;">Project</span>
<svg style="left:223px;top:82px;" width="17.6" height="10" viewBox="0 0 17.6 10"><path d="M0,0 H17.6 L8.8,10Z" fill="#afb1b3"/></svg>
<svg style="left:518px;top:70px;" width="28" height="28" viewBox="0 0 28 28"><circle cx="14" cy="14" r="11.7" fill="none" stroke="#5c5e60" stroke-width="4"/><path d="M14,2 V10.4 M14,17.6 V26 M2,14 H10.4 M17.6,14 H26" stroke="#5c5e60" stroke-width="4.2"/></svg>
<svg style="left:571.5px;top:70px;" width="24.5" height="28" viewBox="0 0 24.5 28"><path d="M0.4,2.05 H24.5 M0.4,25.9 H24.5" stroke="#afb1b3" stroke-width="4.2"/><path d="M6,12 L12.7,6.2 L19.4,12Z M6,16 L12.7,21.8 L19.4,16Z" fill="#afb1b3"/></svg>
<svg style="left:624px;top:70px;" width="24.5" height="28" viewBox="0 0 24.5 28"><path d="M0,14 H24.5" stroke="#afb1b3" stroke-width="4.1"/><path d="M5,1.6 L12,8.9 L19,1.6Z M5,26.1 L12,19 L19,26.1Z" fill="#afb1b3"/></svg>
<div style="left:668px;top:64px;width:2px;height:39px;background:#515355;"></div>
<svg style="left:688px;top:70px;" width="28" height="28" viewBox="0 0 28 28"><g transform="translate(14,14)" fill="#afb1b3"><circle r="9.4"/><rect x="-3" y="-13" width="6" height="26" transform="rotate(0)"/><rect x="-3" y="-13" width="6" height="26" transform="rotate(60)"/><rect x="-3" y="-13" width="6" height="26" transform="rotate(120)"/><circle r="4.3" fill="#3d3e40"/></g></svg>
<div style="left:742px;top:82px;width:24px;height:4px;background:#afb1b3;"></div>
<svg style="left:799px;top:72.5px;" width="30.3" height="22.2" viewBox="0 0 30 22"><path d="M0,22 C-0.3,14.5 2.2,7.6 7.7,5.2 C11.2,3.7 16,3.7 19,4.6 C20.6,5.1 21.8,5.9 22.8,6.5 C23.4,6.9 25,7 26,6.3 C27.2,5.5 27.3,3.8 26.4,2.8 C25.6,1.9 24,2 23.4,3 C23,3.6 21.9,3.4 21.7,2.6 C21.6,1.6 22.6,0.5 24.3,0.1 C26.4,-0.3 28.6,0.8 29.5,2.8 C30.5,5 29.8,7 28.6,8.6 C27.6,10.6 25.6,12.6 24,14.6 C23,15.9 22.8,17.4 22.6,18.8 C22.5,20 22.2,22 21.8,22 L18.6,22 C18.6,18.2 12.6,18.2 12.6,22 L8.9,22 C8.9,18.2 3.5,18.2 3.5,22 Z" fill="#9aa7b0" fill-opacity="0.8"/><path d="M5.2,6.9 L7.9,11.4 L13.6,9" fill="none" stroke="#4e5254" stroke-width="1.1" stroke-opacity=".8"/><circle cx="20.1" cy="9.1" r="0.75" fill="#4e5254" fill-opacity=".8"/></svg>
<span style="line-height:29px;height:29px;font-size:22px;color:#d67f70;letter-spacing:0.792px;left:837.95px;top:69.68px;">sample.gradle</span>
<svg style="left:1000px;top:76px;" width="16" height="16" viewBox="0 0 16 16"><path d="M1.4,1.4 L14.6,14.6 M14.6,1.4 L1.4,14.6" stroke="#7b7e80" stroke-width="1.8"/></svg>
<div style="left:0px;top:338px;width:42px;height:148px;background:#2d2f30;"></div>
<span style="line-height:30px;height:30px;font-size:23px;color:#bbbbbb;letter-spacing:0.100px;left:5.63px;top:276.75px;transform-origin:0 0;transform:rotate(-90deg);">Resource Manager</span>
<svg style="left:10px;top:286px;" width="22" height="23" viewBox="0 0 22 23"><path d="M10.8,0.1 L17.2,10 H4.9 Z" fill="#afb1b3"/><rect x="0" y="12" width="10" height="10.1" fill="#afb1b3"/><circle cx="17.2" cy="16.9" r="5" fill="#afb1b3"/></svg>
<span style="line-height:30px;height:30px;font-size:23px;color:#ffffff;letter-spacing:0.342px;left:5.63px;top:432.05px;transform-origin:0 0;transform:rotate(-90deg);-webkit-text-stroke:0.55px;">Project</span>
<svg style="left:10px;top:444px;" width="22" height="18" viewBox="0 0 22 18"><path d="M0,0 H9.4 L12,3.4 H22 V18 H0 Z" fill="#afb1b3"/></svg>
<span style="line-height:30px;height:30px;font-size:23px;color:#bbbbbb;letter-spacing:0.250px;left:5.63px;top:587.65px;transform-origin:0 0;transform:rotate(-90deg);">Commit</span>
<svg style="left:7.7px;top:599px;" width="27" height="18" viewBox="0 0 27 18"><path d="M0,9 H26.4" stroke="#afb1b3" stroke-width="4"/><circle cx="13.2" cy="9" r="5.95" fill="#3d3e40" stroke="#afb1b3" stroke-width="4.3"/></svg>
<span style="line-height:30px;height:30px;font-size:23px;color:#bbbbbb;letter-spacing:0.092px;left:5.63px;top:806.35px;transform-origin:0 0;transform:rotate(-90deg);">Pull Requests</span>
<svg style="left:11.9px;top:815.9px;" width="21" height="23" viewBox="0 0 21 23"><rect x="0" y="0" width="4.2" height="22.2" fill="#afb1b3"/><path d="M4.8,8.1 L12.1,1.2 V15.1 Z" fill="#afb1b3"/><path d="M12,8.1 H18.25 V20.2" fill="none" stroke="#afb1b3" stroke-width="3.9"/></svg>
<span style="line-height:30px;height:30px;font-size:23px;color:#bbbbbb;letter-spacing:0.300px;left:5.63px;top:1259.95px;transform-origin:0 0;transform:rotate(-90deg);">Bookmarks</span>
<svg style="left:11.8px;top:1270px;" width="18.5" height="22" viewBox="0 0 18.5 22"><path d="M0,0 H18.5 V22 L9.25,14.2 L0,22 Z" fill="#afb1b3"/></svg>
<span style="line-height:30px;height:30px;font-size:23px;color:#bbbbbb;letter-spacing:0.281px;left:5.63px;top:1484.15px;transform-origin:0 0;transform:rotate(-90deg);">Build Variants</span>
<svg style="left:9.5px;top:1495px;" width="23" height="17" viewBox="0 0 23 17"><path d="M0.2,17 A11.2,12 0 0 1 22.6,17 Z" fill="#afb1b3"/><path d="M6.4,7 L3.4,1.3 M16.6,7 L19.7,1.3" stroke="#afb1b3" stroke-width="2"/></svg>
<span style="line-height:30px;height:30px;font-size:23px;color:#bbbbbb;letter-spacing:0.519px;left:5.63px;top:1659.40px;transform-origin:0 0;transform:rotate(-90deg);">Structure</span>
<svg style="left:12px;top:1672px;" width="18" height="18" viewBox="0 0 18 18"><rect x="9.6" y="0" width="8.4" height="8.4" fill="#afb1b3"/><rect x="0" y="9.6" width="8.4" height="8.4" fill="#afb1b3"/><rect x="9.6" y="9.6" width="8.4" height="8.4" fill="#afb1b3"/></svg>
<svg style="left:2846px;top:78px;" width="27" height="20" viewBox="0 0 30 22"><path d="M0,22 C-0.3,14.5 2.2,7.6 7.7,5.2 C11.2,3.7 16,3.7 19,4.6 C20.6,5.1 21.8,5.9 22.8,6.5 C23.4,6.9 25,7 26,6.3 C27.2,5.5 27.3,3.8 26.4,2.8 C25.6,1.9 24,2 23.4,3 C23,3.6 21.9,3.4 21.7,2.6 C21.6,1.6 22.6,0.5 24.3,0.1 C26.4,-0.3 28.6,0.8 29.5,2.8 C30.5,5 29.8,7 28.6,8.6 C27.6,10.6 25.6,12.6 24,14.6 C23,15.9 22.8,17.4 22.6,18.8 C22.5,20 22.2,22 21.8,22 L18.6,22 C18.6,18.2 12.6,18.2 12.6,22 L8.9,22 C8.9,18.2 3.5,18.2 3.5,22 Z" fill="#afb1b3" fill-opacity="1"/><path d="M5.2,6.9 L7.9,11.4 L13.6,9" fill="none" stroke="#3d3e40" stroke-width="1.1" stroke-opacity=".8"/><circle cx="20.1" cy="9.1" r="0.75" fill="#3d3e40" fill-opacity=".8"/></svg>
<span style="line-height:30px;height:30px;font-size:23px;color:#bbbbbb;letter-spacing:-0.130px;left:2874.97px;top:110.05px;transform-origin:0 0;transform:rotate(90deg);">Gradle</span>
<svg style="left:2847.5px;top:225.2px;" width="24" height="28" viewBox="0 0 24 28"><path d="M18.6,7 V2.5 A2,2 0 0 0 16.6,0.5 H2.4 A2,2 0 0 0 0.4,2.5 V23 A2,2 0 0 0 2.4,25 H6.4 V19 H2.5 V5 H16.5 V7 Z" fill="#afb1b3"/><rect x="7.3" y="7.6" width="16.4" height="20.4" rx="3" fill="#3d3e40"/><rect x="9.6" y="9.9" width="11.7" height="15.8" rx="1.6" fill="none" stroke="#afb1b3" stroke-width="2.2"/><rect x="9" y="20.5" width="12.9" height="6.3" rx="1.8" fill="#afb1b3"/><rect x="14.5" y="22.7" width="2" height="2" fill="#3d3e40"/></svg>
<span style="line-height:30px;height:30px;font-size:23px;color:#bbbbbb;letter-spacing:0.035px;left:2874.97px;top:259.95px;transform-origin:0 0;transform:rotate(90deg);">Device Manager</span>
<svg style="left:2847px;top:474px;" width="28" height="28" viewBox="0 0 28 28"><path d="M3.6,20.6 C6,17 5,9 9.4,5.4 A7,7 0 0 1 18.8,5.4 C23,9 22,17 24.6,20.6 Z" fill="#afb1b3"/><path d="M2.4,18.6 H25.6 V21 H2.4Z" fill="#afb1b3"/><path d="M8.6,22.4 H16 L12.3,27.4 Z" fill="#afb1b3" transform="rotate(90 12.3 24.9) translate(0,3.6)"/><circle cx="20" cy="6.8" r="7.4" fill="#3d3e40"/><circle cx="20" cy="6.8" r="5.6" fill="#c75450"/></svg>
<span style="line-height:30px;height:30px;font-size:23px;color:#bbbbbb;letter-spacing:0.587px;left:2874.97px;top:509.25px;transform-origin:0 0;transform:rotate(90deg);">Notifications</span>
<svg style="left:2849px;top:1191px;" width="20" height="27" viewBox="0 0 20 27"><rect x="1.4" y="1.4" width="16.4" height="24" rx="2" fill="none" stroke="#afb1b3" stroke-width="2.8"/><rect x="1.4" y="20.4" width="16.4" height="5" fill="#afb1b3"/><rect x="7" y="22.2" width="5.2" height="1.6" fill="#3d3e40"/></svg>
<span style="line-height:30px;height:30px;font-size:23px;color:#bbbbbb;letter-spacing:0.013px;left:2874.97px;top:1226.25px;transform-origin:0 0;transform:rotate(90deg);">Device File Explorer</span>
<svg style="left:2849.5px;top:1483.5px;" width="22" height="28" viewBox="0 0 22 28"><path d="M14.5,12.3 V2.4 A2,2 0 0 0 12.5,0.4 H2.4 A2,2 0 0 0 0.4,2.4 V20.4 A2,2 0 0 0 2.4,22.4 H6.5 V18.3 H2.7 V4.7 H12.3 V12.3 Z" fill="#afb1b3"/><rect x="9.4" y="15.7" width="10.1" height="5.6" fill="none" stroke="#afb1b3" stroke-width="2.2"/><rect x="8.3" y="24.5" width="12.3" height="2.2" fill="#afb1b3"/></svg>
<span style="line-height:30px;height:30px;font-size:23px;color:#bbbbbb;letter-spacing:0.143px;left:2874.97px;top:1515.75px;transform-origin:0 0;transform:rotate(90deg);">Running Devices</span>
<svg style="left:62px;top:1727px;" width="18" height="24" viewBox="0 0 18 24"><path d="M3.6,3 V21 M13.7,7.5 V9.6 C13.7,15.4 3.6,12.4 3.6,18" fill="none" stroke="#afb1b3" stroke-width="3.2"/><circle cx="3.6" cy="3.5" r="3.4" fill="#afb1b3"/><circle cx="3.6" cy="20.6" r="3.4" fill="#afb1b3"/><circle cx="13.7" cy="7.4" r="3.4" fill="#afb1b3"/></svg>
<span style="line-height:29px;height:29px;font-size:22px;color:#bbbbbb;letter-spacing:0.800px;left:91.80px;top:1724.08px;">Git</span>
<svg style="left:160px;top:1727px;" width="26" height="24" viewBox="0 0 26 24"><circle cx="10.4" cy="10" r="8" fill="none" stroke="#afb1b3" stroke-width="3.6"/><path d="M15.6,15.4 L24,23.6" stroke="#afb1b3" stroke-width="4.2"/></svg>
<span style="line-height:29px;height:29px;font-size:22px;color:#bbbbbb;letter-spacing:0.933px;left:193.65px;top:1724.08px;">Find</span>
<svg style="left:277.5px;top:1732px;" width="23" height="17" viewBox="0 0 23 17"><path d="M0.4,2 H22.4 M0.4,8.2 H13.6 M0.4,14.3 H18.4" stroke="#afb1b3" stroke-width="3.7"/></svg>
<span style="line-height:29px;height:29px;font-size:22px;color:#bbbbbb;letter-spacing:1.130px;left:309.65px;top:1724.08px;">Logcat</span>
<svg style="left:421px;top:1731px;" width="28" height="17" viewBox="0 0 28 17"><path d="M3.1,17 A10.9,10.9 0 0 1 24.9,17" fill="none" stroke="#afb1b3" stroke-width="4.9"/><path d="M20.5,6.1 L16.1,16 A2.4,2.4 0 1 1 11.9,13.7 Z" fill="#3d3e40" stroke="#3d3e40" stroke-width="3.4" stroke-linejoin="round"/><path d="M20.5,6.1 L16.1,16 A2.4,2.4 0 1 1 11.9,13.7 Z" fill="#afb1b3"/></svg>
<span style="line-height:29px;height:29px;font-size:22px;color:#bbbbbb;letter-spacing:0.929px;left:455.25px;top:1724.08px;">Profiler</span>
<svg style="left:577.5px;top:1725px;" width="27" height="27" viewBox="0 0 27 27"><path d="M7.6,1.8 H19.8 L25.3,9.5 L13.6,25 L1.9,9.5 Z" fill="none" stroke="#afb1b3" stroke-width="2" stroke-linejoin="round"/><path d="M1.9,9.5 H25.3 M8.7,1.8 L9.8,9.5 L13.6,25 L17.4,9.5 L18.6,1.8" fill="none" stroke="#afb1b3" stroke-width="1.7" stroke-linejoin="round"/></svg>
<span style="line-height:29px;height:29px;font-size:22px;color:#bbbbbb;letter-spacing:0.700px;left:613.20px;top:1724.08px;">App Quality Insights</span>
<svg style="left:869.5px;top:1727px;" width="27" height="24" viewBox="0 0 30.5 28"><path d="M0.2,11.1 L11.6,0.2 L18,0 L17.8,1.7 L12.4,6.1 L30.2,23 L25.4,28 L9,10.6 L4.4,14.8 Z" fill="#afb1b3"/></svg>
<span style="line-height:29px;height:29px;font-size:22px;color:#bbbbbb;letter-spacing:1.238px;left:903.25px;top:1724.08px;">Build</span>
<svg style="left:997.5px;top:1729.5px;" width="21" height="17.5" viewBox="0 0 21 17.5"><path d="M0,1.8 H4 M0,8.75 H4 M0,15.7 H4 M6.6,1.8 H21 M6.6,8.75 H21 M6.6,15.7 H21" stroke="#afb1b3" stroke-width="3.4"/></svg>
<span style="line-height:29px;height:29px;font-size:22px;color:#bbbbbb;letter-spacing:-0.200px;left:1029.00px;top:1724.08px;">TODO</span>
<svg style="left:1134px;top:1727px;" width="22" height="22" viewBox="0 0 22 22"><circle cx="11" cy="11" r="10.6" fill="#afb1b3"/><path d="M11,4.6 V12.4" stroke="#3d3e40" stroke-width="3.2"/><rect x="9.4" y="14.6" width="3.2" height="3.2" fill="#3d3e40"/></svg>
<span style="line-height:29px;height:29px;font-size:22px;color:#bbbbbb;letter-spacing:0.871px;left:1165.25px;top:1724.08px;">Problems</span>
<svg style="left:1308px;top:1728px;" width="22" height="20" viewBox="0 0 22 20"><rect width="22" height="20" fill="#afb1b3"/><path d="M3.6,4.6 L8.6,9.4 L3.6,14.2" fill="none" stroke="#3d3e40" stroke-width="2.2"/><path d="M10.6,14.6 H17.4" stroke="#3d3e40" stroke-width="2.2"/></svg>
<span style="line-height:29px;height:29px;font-size:22px;color:#bbbbbb;letter-spacing:0.636px;left:1340.50px;top:1724.08px;">Terminal</span>
<svg style="left:1469.5px;top:1727px;" width="27" height="23" viewBox="0 0 27 23"><path d="M7,0.4 H20 L26.4,11.5 L20,22.6 H7 L0.6,11.5 Z" fill="#afb1b3"/><path d="M9.6,5.4 L19,11.5 L9.6,17.6 Z" fill="#3d3e40"/></svg>
<span style="line-height:29px;height:29px;font-size:22px;color:#bbbbbb;letter-spacing:0.786px;left:1503.80px;top:1724.08px;">Services</span>
<svg style="left:1639px;top:1727.5px;" width="24" height="25" viewBox="0 0 24 25"><rect x="5.3" y="0.3" width="13.9" height="12" rx="2.8" fill="#afb1b3"/><rect x="0.7" y="8.2" width="22.5" height="2.5" fill="#afb1b3"/><rect x="3.3" y="10.7" width="17.6" height="7" rx="2.6" fill="#afb1b3"/><path d="M6.4,16 H18 V20.3 L21.2,22.6 V24.7 H3 V22.6 L6.4,20.3 Z" fill="#afb1b3"/></svg>
<span style="line-height:29px;height:29px;font-size:22px;color:#bbbbbb;letter-spacing:0.915px;left:1673.00px;top:1724.08px;">App Inspection</span>
<svg style="left:2603.5px;top:1725.5px;" width="28" height="26" viewBox="0 0 28 26"><path d="M2,14.8 V0.9 H20.1" fill="none" stroke="#afb1b3" stroke-width="2"/><path d="M11.4,17.6 H7.2 V6.1 H21.8 V9.5" fill="none" stroke="#afb1b3" stroke-width="2"/><circle cx="17.2" cy="15.3" r="3.8" fill="none" stroke="#afb1b3" stroke-width="2.2"/><path d="M19.9,18 L25.9,23.4" stroke="#afb1b3" stroke-width="2.8"/></svg>
<span style="line-height:29px;height:29px;font-size:22px;color:#bbbbbb;letter-spacing:0.933px;left:2636.65px;top:1724.08px;">Layout Inspector</span>
<svg style="left:12px;top:1767.9px;" width="25" height="25" viewBox="0 0 25 25"><rect x="5.1" y="1" width="18.1" height="18.2" fill="none" stroke="#afb1b3" stroke-width="2"/><path d="M1,4.1 V23.1 H20" fill="none" stroke="#afb1b3" stroke-width="2"/></svg>
<span style="line-height:29px;height:29px;font-size:22px;color:#bbbbbb;letter-spacing:0.928px;left:61.25px;top:1765.48px;">Failed to start monitoring emulator-5554 (today 2:06 PM)</span>
<span style="line-height:28px;height:28px;font-size:21px;color:#bbbbbb;letter-spacing:0.000px;left:2364.00px;top:1766.32px;">1:1</span>
<span style="line-height:28px;height:28px;font-size:21px;color:#bbbbbb;letter-spacing:2.000px;left:2417.25px;top:1766.32px;">LF</span>
<span style="line-height:29px;height:29px;font-size:22px;color:#bbbbbb;letter-spacing:1.725px;left:2467.25px;top:1765.48px;">UTF-8</span>
<span style="line-height:29px;height:29px;font-size:22px;color:#bbbbbb;letter-spacing:0.850px;left:2560.30px;top:1765.48px;">4 spaces</span>
<svg style="left:2681px;top:1766.5px;" width="21" height="27" viewBox="0 0 21 27"><path d="M5.1,3 V24 M17.2,4.4 V7.6 C17.2,14.6 5.1,12 5.1,18.4" fill="none" stroke="#afb1b3" stroke-width="2.6"/><circle cx="5.1" cy="3.4" r="3.3" fill="#afb1b3"/><circle cx="5.1" cy="24" r="3.3" fill="#afb1b3"/><circle cx="17.2" cy="4.5" r="3.3" fill="#afb1b3"/></svg>
<span style="line-height:29px;height:29px;font-size:22px;color:#bbbbbb;letter-spacing:1.317px;left:2711.20px;top:1765.48px;">main</span>
<svg style="left:2781px;top:1767px;" width="24" height="24" viewBox="0 0 24 24"><path d="M2.45,10.8 V7.1 A4.55,4.55 0 0 1 11.55,7.1 V11" fill="none" stroke="#afb1b3" stroke-width="2.9"/><rect x="7" y="10.8" width="16.1" height="12.2" fill="#afb1b3"/></svg>
<svg style="left:2832px;top:1767px;" width="25" height="24" viewBox="0 0 25 24"><path d="M3,0.9 H21.2 A3,3 0 0 1 24.2,3.9 V23 L18.2,19.2 H3 A3,3 0 0 1 0,16.2 V3.9 A3,3 0 0 1 3,0.9 Z" fill="#afb1b3"/><rect x="10.1" y="3.3" width="3.7" height="7.9" fill="#3d3e40"/><rect x="10.1" y="13.2" width="3.7" height="3.6" fill="#3d3e40"/></svg>
</div></body></html>
